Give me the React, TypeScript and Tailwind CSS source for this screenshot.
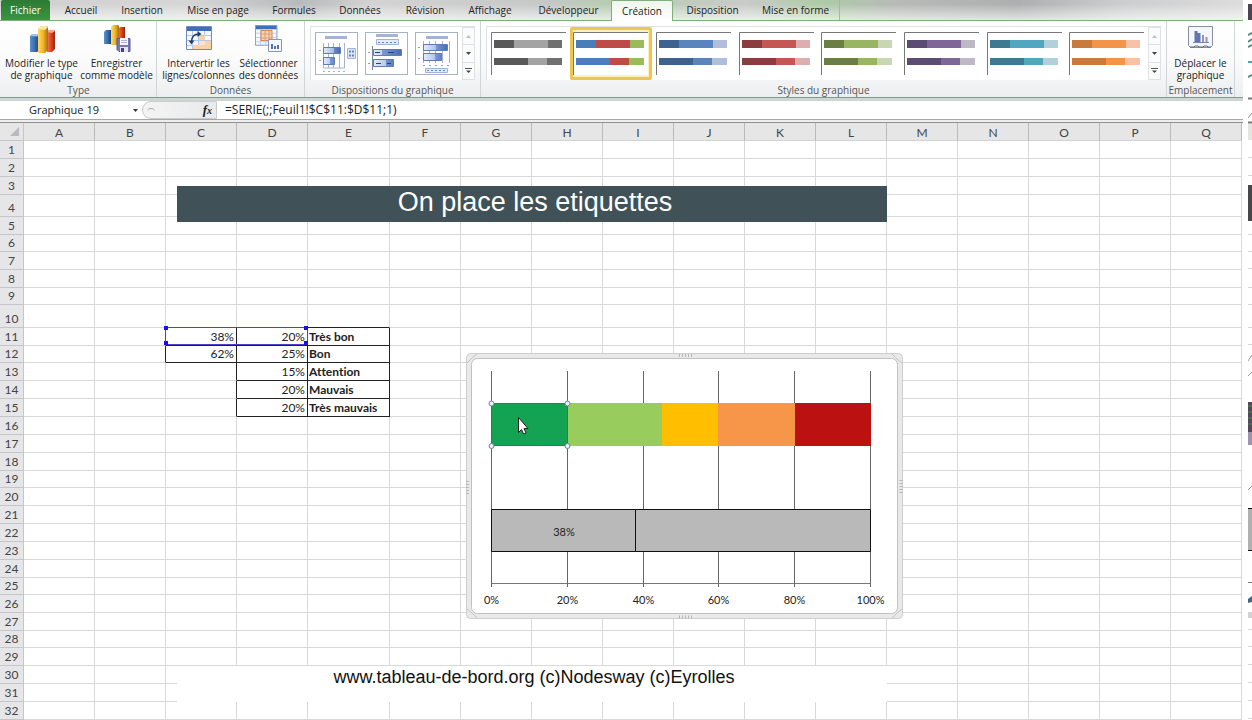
import React from "react";

const tabs = [
  { label: "Accueil", width: "w-[62px]" },
  { label: "Insertion", width: "w-[60px]" },
  { label: "Mise en page", width: "w-[92px]" },
  { label: "Formules", width: "w-[60px]" },
  { label: "Données", width: "w-[72px]" },
  { label: "Révision", width: "w-[58px]" },
  { label: "Affichage", width: "w-[72px]" },
  { label: "Développeur", width: "w-[85px]" },
  { label: "Création", width: "w-[62px]" },
  { label: "Disposition", width: "w-[79px]" },
  { label: "Mise en forme", width: "w-[88px]" },
];

const chartStyles = [
  ["#595959", "#a3a3a3", "#707070"],
  ["#4a7ebb", "#be4b48", "#9abb59"],
  ["#3c6290", "#5a84be", "#b0bddb"],
  ["#8a3c3e", "#c45654", "#dcaeb0"],
  ["#6c7f42", "#9ab561", "#c9d6b2"],
  ["#5c4c74", "#7e6699", "#bcb8c4"],
  ["#3b7a90", "#52a7c0", "#b0d0dc"],
  ["#c97b3d", "#f39549", "#f8c2a8"],
];

const columns = "ABCDEFGHIJKLMNOPQ".split("");

const rowHeights = [
  18, 18, 18, 22, 18, 17, 18, 18, 17, 23, 18, 17, 18, 18, 18, 18, 18, 18, 17,
  18, 18, 18, 18, 18, 17, 18, 18, 17, 18, 18, 18, 18,
];

const heightClass: Record<number, string> = {
  17: "h-[17px]",
  18: "h-[18px]",
  22: "h-[22px]",
  23: "h-[23px]",
};

const cells: Record<string, string> = {
  C11: "38%", D11: "20%", E11: "Très bon",
  C12: "62%", D12: "25%", E12: "Bon",
  D13: "15%", E13: "Attention",
  D14: "20%", E14: "Mauvais",
  D15: "20%", E15: "Très mauvais",
};

function isBoxed(col: string, row: number) {
  if (row < 11 || row > 15) return false;
  return col === "D" || col === "E" || (col === "C" && row < 13);
}

function cellBorders(index: number, row: number) {
  const col = columns[index];
  const right = isBoxed(col, row) || isBoxed(columns[index + 1], row);
  const bottom = isBoxed(col, row) || isBoxed(col, row + 1);
  return `${right ? "border-r-[#222]" : "border-r-[#d9d9dc]"} ${bottom ? "border-b-[#222]" : "border-b-[#d9d9dc]"}`;
}

function ChartTypeIcon() {
  return (
    <svg width="28" height="28" viewBox="0 0 28 28" aria-hidden="true">
      <defs>
        <linearGradient id="blue" x2="1"><stop stopColor="#5a92cc" /><stop offset=".5" stopColor="#3a6fae" /><stop offset="1" stopColor="#1f4478" /></linearGradient>
        <linearGradient id="gold" x2="1"><stop stopColor="#ffd96a" /><stop offset=".5" stopColor="#f4b62a" /><stop offset="1" stopColor="#a86e08" /></linearGradient>
        <linearGradient id="red" x2="1"><stop stopColor="#f0805a" /><stop offset=".5" stopColor="#dc4526" /><stop offset="1" stopColor="#97240f" /></linearGradient>
      </defs>
      <path d="M2 11l2-2h6l1 1v16l-2 1H2z" fill="url(#blue)" />
      <path d="M2 11l2-2h6l1 1-2 1.500z" fill="#9cc2ea" />
      <path d="M19 7l2-2h5l1 1v18l-3 3h-5z" fill="url(#red)" />
      <path d="M19 7l2-2h5l1 1-3 2z" fill="#f7a58c" />
      <path d="M10 4l3-3h5l2 1v23l-3 3h-7z" fill="url(#gold)" />
      <path d="M10 4l3-3h5l2 1-3 3z" fill="#ffe9a0" />
    </svg>
  );
}

function SaveTemplateIcon() {
  return (
    <svg width="28" height="28" viewBox="0 0 28 28" aria-hidden="true">
      <path d="M1 7l2-2h5v14H1z" fill="url(#blue)" />
      <path d="M15 4l2-2h5v14h-7z" fill="url(#red)" />
      <path d="M8 2l2-2h5l1 1v17l-2 2H8z" fill="url(#gold)" />
      <path d="M14 13.500h13v13H16l-2-2z" fill="#7b76b4" stroke="#5a5694" />
      <path d="M17 13h8v7h-8z" fill="#f6f6fc" />
      <path d="M18 15.500h6M18 17.500h6" stroke="#b6b6cc" />
      <path d="M17 22h8v5h-8z" fill="#e6e6f0" />
      <path d="M18 23h3v4h-3z" fill="#45427c" />
    </svg>
  );
}

function TableGlyph() {
  return (
    <g>
      <path d="M.5.5h25v23H.5z" fill="#f5f9ff" stroke="#6d8bc0" />
      <path d="M1 1h24v4H1z" fill="#3f6fb8" />
      <path d="M1 9.500h24M1 14.500h24M1 19.500h24M6.500 5v18M12.500 5v18M18.500 5v18" stroke="#b6c8e6" fill="none" />
    </g>
  );
}

function SwitchIcon() {
  return (
    <svg width="28" height="28" viewBox="-1 -1 28 28" aria-hidden="true">
      <TableGlyph />
      <path d="M13 10h6v4h-6zM19 15h6v8h-6zM7 19h12v4H7z" fill="#f8d3a8" />
      <path d="M13 15h6v4h-6z" fill="#fbe5c8" />
      <path d="M5.500 16C5.500 11 8 8 13 8" fill="none" stroke="#223f70" strokeWidth="1.500" />
      <path d="M11.500 5l4 3-4 3zM2.500 14.500h6L5.500 18.500z" fill="#223f70" />
    </svg>
  );
}

function SelectDataIcon() {
  return (
    <svg width="28" height="28" viewBox="0 0 28 28" aria-hidden="true">
      <g transform="scale(.86)"><TableGlyph /></g>
      <path d="M6 5.500h11v10H6z" fill="#f8d5b2" stroke="#d9844c" />
      <path d="M6 9h11M6 13h11M10 5v11M14 5v11" stroke="#dc9b70" />
      <path d="M13.500 14.500h13v12h-13z" fill="#f5f8fd" stroke="#8797b3" />
      <path d="M17 24v-5M20 24v-3M23 24v-4" stroke="#5573a8" strokeWidth="2" />
    </svg>
  );
}

function MoveChartIcon() {
  return (
    <svg width="28" height="26" viewBox="0 0 28 26" aria-hidden="true">
      <path d="M1.500 1.500h24v19l-2 2h-20l-2-2z" fill="#f4f6fb" stroke="#868d9c" />
      <path d="M3 22h4l1-1h3l1 1h4l1-1h3l1 1h3" stroke="#5f6673" fill="none" />
      <path d="M9 6v11M12 8v9" stroke="#6275ae" strokeWidth="3" />
      <path d="M16 10v7M19.500 12v5" stroke="#9a91bd" strokeWidth="2" />
      <path d="M6 17.500h16" stroke="#7c86a8" />
    </svg>
  );
}

function LayoutThumb({ kind }: { kind: number }) {
  return (
    <svg width="43" height="43" viewBox="0 0 43 43" aria-hidden="true">
      <defs>
        <linearGradient id="pale" x2="1"><stop stopColor="#e3ecfa" /><stop offset="1" stopColor="#7f9dd8" /></linearGradient>
        <linearGradient id="deep" x2="1"><stop stopColor="#7d9ad4" /><stop offset="1" stopColor="#4a6cb2" /></linearGradient>
      </defs>
      <rect x=".5" y=".5" width="42" height="42" fill="#fff" stroke="#a9b3c6" />
      {kind === 0 && (
        <g>
          <path d="M10 5.500h22" stroke="#a5b2d4" strokeWidth="3" />
          <path d="M8.500 11v25h21M13.500 11v25M18.500 11v25M24.500 11v25M29.500 11v25" stroke="#a9b3c8" fill="none" />
          <path d="M8.500 15.500h17v6h-17zM8.500 25.500h11v7h-11z" fill="url(#pale)" stroke="#5f7cb8" />
          <path d="M19 16h6v5h-6zM15 26h4v6h-4z" fill="url(#deep)" />
          <path d="M4 18.500h2M4 28.500h2M8 39.500h23" stroke="#a3b1cf" strokeDasharray="2 3" />
          <path d="M32.500 16.500h8v10h-8z" fill="#dce6f7" stroke="#9fb3dc" />
          <path d="M34 19.500h5M34 23.500h5" stroke="#6484c4" strokeWidth="2" strokeDasharray="2 1" />
        </g>
      )}
      {kind === 1 && (
        <g>
          <path d="M11 3.500h22" stroke="#a5b2d4" strokeWidth="3" />
          <path d="M11.500 7.500h22v5h-22z" fill="#e4ecf9" stroke="#9fb3dc" />
          <path d="M13 10.500h19" stroke="#6484c4" strokeDasharray="2 2" />
          <path d="M7.500 14v24" stroke="#7787a8" />
          <path d="M8.500 17.500h28v6h-28zM8.500 27.500h20v7h-20z" fill="url(#pale)" stroke="#5f7cb8" />
          <path d="M17 18h19v5H17zM21 28h7v6h-7z" fill="url(#deep)" />
          <path d="M10 20.500h5M23 20.500h6M11 31.500h5M22 31.500h4" stroke="#2c4274" />
          <path d="M3 20.500h2M3 31.500h2" stroke="#8fa0c4" />
        </g>
      )}
      {kind === 2 && (
        <g>
          <path d="M11 5.500h22" stroke="#a5b2d4" strokeWidth="3" />
          <path d="M8.500 9v22M14.500 9v22M20.500 9v22M27.500 9v22M34.500 9v22" stroke="#a9b3c8" />
          <path d="M8.500 12.500h24v6h-24zM8.500 21.500h18v7h-18z" fill="url(#pale)" stroke="#5f7cb8" />
          <path d="M21 13h11v5H21zM20 22h6v6h-6z" fill="url(#deep)" />
          <path d="M3 15.500h2M3 26.500h2M8 33.500h27" stroke="#8fa0c4" strokeDasharray="2 4" />
          <path d="M10.500 36.500h22v4h-22z" fill="#e4ecf9" stroke="#9fb3dc" />
          <path d="M12 38.500h19" stroke="#6484c4" strokeDasharray="2 2" />
        </g>
      )}
    </svg>
  );
}

function GalleryScroll() {
  return (
    <div className="flex w-[13px] flex-col border border-[#dfe1e4] bg-[#fafbfb]">
      <button aria-label="Ligne précédente" className="flex flex-1 items-center justify-center">
        <svg width="5" height="3" viewBox="0 0 5 3"><path d="M0 3h5L2.500 0z" fill="#c0c0c0" /></svg>
      </button>
      <button aria-label="Ligne suivante" className="flex flex-1 items-center justify-center border-y border-[#dfe1e4]">
        <svg width="5" height="3" viewBox="0 0 5 3"><path d="M0 0h5L2.500 3z" fill="#444" /></svg>
      </button>
      <button aria-label="Autres" className="flex flex-1 items-center justify-center">
        <svg width="7" height="6" viewBox="0 0 7 6"><path d="M0 .5h7" stroke="#555" /><path d="M1 2.500h5L3.500 5z" fill="#444" /></svg>
      </button>
    </div>
  );
}

function Group({ label, className, children }: { label: string; className: string; children: React.ReactNode }) {
  return (
    <section aria-label={label} className={`flex flex-col border-r border-[#d0d6d5] ${className}`}>
      <div className="flex h-[62px] justify-center">{children}</div>
      <div className="text-center text-[10px] leading-[14px] whitespace-nowrap text-[#555]">{label}</div>
    </section>
  );
}

function BigButton({ icon, lines, className }: { icon: React.ReactNode; lines: string[]; className: string }) {
  return (
    <button className={`flex flex-col items-center pt-1 ${className}`}>
      <span className="flex h-8 items-start">{icon}</span>
      {lines.map((line) => (
        <span key={line} className="text-[10px] leading-3 whitespace-nowrap text-[#222]">{line}</span>
      ))}
    </button>
  );
}

function StyleThumb({ colors, selected, name }: { colors: string[]; selected: boolean; name: string }) {
  return (
    <button
      aria-label={name}
      aria-pressed={selected}
      className={`flex items-center justify-center rounded-xs border-[3px] ${selected ? "border-[#efc655] bg-[#fff3b8]" : "border-transparent"}`}
    >
      <svg width="75" height="43" viewBox="0 0 75 43">
        <rect width="75" height="43" fill="#fff" />
        <path d="M.5 43V.5H75" fill="none" stroke="#777" />
        <path d="M3 8h20v8H3zM3 26h34v7H3z" fill={colors[0]} />
        <path d="M23 8h34v8H23zM37 26h19v7H37z" fill={colors[1]} />
        <path d="M57 8h14v8H57zM56 26h15v7H56z" fill={colors[2]} />
      </svg>
    </button>
  );
}

function Ribbon() {
  return (
    <div className="flex h-[77px] border-b border-[#7f9a8c] bg-linear-to-b from-white via-[#fbfbfc] to-[#eceeef] pl-px">
      <Group label="Type" className="w-[156px]">
        <BigButton icon={<ChartTypeIcon />} lines={["Modifier le type", "de graphique"]} className="w-[76px]" />
        <BigButton icon={<SaveTemplateIcon />} lines={["Enregistrer", "comme modèle"]} className="w-[74px]" />
      </Group>
      <Group label="Données" className="w-[148px]">
        <BigButton icon={<SwitchIcon />} lines={["Intervertir les", "lignes/colonnes"]} className="w-[76px]" />
        <BigButton icon={<SelectDataIcon />} lines={["Sélectionner", "des données"]} className="w-[64px]" />
      </Group>
      <Group label="Dispositions du graphique" className="w-[176px]">
        <div className="mt-[5px] flex h-[54px] border-t border-l border-[#dfe1e4] bg-white">
          <div className="flex items-center gap-[7px] px-1">
            {[0, 1, 2].map((kind) => (
              <button key={kind} aria-label={`Mise en forme ${kind + 1}`}><LayoutThumb kind={kind} /></button>
            ))}
          </div>
          <GalleryScroll />
        </div>
      </Group>
      <Group label="Styles du graphique" className="flex-1">
        <div className="mt-[5px] mr-[5px] ml-[5px] flex h-[54px] flex-1 border-t border-l border-[#dfe1e4] bg-white">
          <div className="grid flex-1 grid-cols-8">
            {chartStyles.map((colors, i) => (
              <StyleThumb key={i} colors={colors} selected={i === 1} name={`Style ${i + 1}`} />
            ))}
          </div>
          <GalleryScroll />
        </div>
      </Group>
      <Group label="Emplacement" className="w-[68px]">
        <BigButton icon={<MoveChartIcon />} lines={["Déplacer le", "graphique"]} className="w-[64px]" />
      </Group>
      <div className="w-2" />
    </div>
  );
}

function FormulaBar() {
  return (
    <div className="flex h-[19px] border-b border-[#a8a8a8] bg-white text-[11px] text-[#222]">
      <input aria-label="Zone Nom" defaultValue="Graphique 19" className="w-[128px] bg-white text-center outline-none" />
      <button aria-label="Liste des noms" className="flex w-[14px] items-center justify-center">
        <svg width="5" height="3" viewBox="0 0 5 3"><path d="M0 0h5L2.500 3z" fill="#333" /></svg>
      </button>
      <div className="flex w-[75px] items-center justify-between rounded-l-full border border-[#c9cbcd] bg-linear-to-r from-[#f4f4f5] to-[#e9eaeb] pr-1 pl-1">
        <span className="h-1 w-2 rounded-t-full border-t border-[#aaa]" />
        <button aria-label="Insérer une fonction" className="font-['Liberation_Serif',serif] text-[13px] leading-4 font-bold italic">
          f<span className="text-[10px]">x</span>
        </button>
      </div>
      <input aria-label="Barre de formule" defaultValue="=SERIE(;;Feuil1!$C$11:$D$11;1)" className="min-w-0 flex-1 bg-white pl-2 text-[12px] outline-none" />
    </div>
  );
}

const ticks = [
  [491.5, "0%"], [567.5, "20%"], [643.5, "40%"], [718.5, "60%"], [794.5, "80%"], [870.5, "100%"],
] as const;

const segments = [
  [492, 76, "#14a352"], [568, 94, "#98cd5e"], [662, 56, "#ffbf00"], [718, 77, "#f79549"], [795, 76, "#bb1111"],
] as const;

function Chart() {
  return (
    <svg width="438" height="266" viewBox="465 353 438 266" role="img" aria-label="Graphique 19">
      <rect x="466.5" y="353.5" width="436" height="265" rx="4" fill="#e9e9ea" stroke="#cdced0" />
      <rect x="471.5" y="358.500" width="426" height="255" rx="6" fill="#fff" stroke="#c0c1c3" />
      <path d="M467 363l5-5 5-4M892 354l5 5 5 4M467 609l5 4 5 5M902 609l-5 4-5 5" stroke="#c4c5c7" fill="none" />
      <g stroke="#b5b6b8" strokeWidth="3" strokeDasharray="1 2">
        <path d="M679 355.500h13M679 617h13M467.500 481v13M901 480v13" />
      </g>
      <path d="M491 583.500h380" stroke="#777" />
      {ticks.map(([x, label]) => (
        <g key={label}>
          <path d={`M${x} 371V587`} stroke="#666" />
          <text x={x} y="604" textAnchor="middle" fontSize="11" fill="#222">{label}</text>
        </g>
      ))}
      {segments.map(([x, width, color]) => (
        <rect key={x} x={x} y="403" width={width} height="43" fill={color} />
      ))}
      <rect x="491.500" y="403.500" width="76" height="42" fill="none" stroke="#4b6c62" />
      {[[491.5, 403.5], [567.5, 403.5], [491.5, 446], [567.5, 446]].map(([cx, cy]) => (
        <circle key={`${cx}-${cy}`} cx={cx} cy={cy} r="2.500" fill="#e8f1f5" stroke="#6b8494" />
      ))}
      <path d="M491.500 509.500h144v42h-144zM635.500 509.500h235v42h-235z" fill="#b9b9b9" stroke="#111" />
      <text x="564" y="536" textAnchor="middle" fontSize="11" fill="#222">38%</text>
      <path d="M518.500 417.500v15l3-3 2 4.500 2.500-1-2-4.500h4z" fill="#fff" stroke="#222" strokeWidth="1" />
    </svg>
  );
}

function Sheet() {
  return (
    <main className="relative font-[Lato,sans-serif] text-[12px] text-[#222] [font-variant-ligatures:none]">
      <table className="w-[1242px] table-fixed border-separate border-spacing-0">
        <colgroup>
          <col className="w-[24px]" />
          {columns.map((c) => <col key={c} className={c === "E" ? "w-[82px]" : "w-[71px]"} />)}
        </colgroup>
        <thead>
          <tr className="h-[18px] bg-[#e6e6e7] leading-[14px] text-[#444]">
            <th className="border-r border-b border-[#c5c6c8] p-0">
              <svg className="mr-1 ml-auto" width="9" height="9" viewBox="0 0 9 9" aria-label="Tout sélectionner"><path d="M9 0v9H0z" fill="#b9babd" /></svg>
            </th>
            {columns.map((c) => (
              <th key={c} className="border-r border-b border-r-[#b9babc] border-b-[#d2d3d5] p-0 align-bottom font-normal">{c}</th>
            ))}
          </tr>
        </thead>
        <tbody>
          {rowHeights.map((h, i) => {
            const row = i + 1;
            return (
              <tr key={row} className={`${heightClass[h]} leading-4`}>
                <th className="border-r border-b border-[#c5c6c8] bg-[#e6e6e9] p-0 align-bottom font-normal text-[#444]">{row}</th>
                {columns.map((c, index) => (
                  <td
                    key={c}
                    className={`border-r border-b p-0 align-bottom whitespace-nowrap ${c === "E" ? "pl-px font-bold" : "pr-[2px] text-right"} ${cellBorders(index, row)}`}
                  >
                    {cells[`${c}${row}`]}
                  </td>
                ))}
              </tr>
            );
          })}
        </tbody>
      </table>

      <div className="absolute top-[204px] left-[165px] h-[18px] w-[143px] border border-[#4a42cc]">
        <span className="absolute -top-[2px] -left-[2px] size-1 bg-[#1a10e0]" />
        <span className="absolute -top-[2px] -right-[1px] size-1 bg-[#1a10e0]" />
        <span className="absolute -bottom-[1px] -left-[2px] size-1 bg-[#1a10e0]" />
        <span className="absolute -right-[1px] -bottom-[1px] size-1 bg-[#1a10e0]" />
      </div>
      <h1 className="absolute top-[63px] left-[177px] h-[36px] w-[710px] bg-[#405258] pl-[6px] text-center font-['Liberation_Sans',Arial,sans-serif] text-[27px] leading-8 text-white">
        On place les etiquettes
      </h1>
      <div className="absolute top-[230px] left-[465px]"><Chart /></div>
      <p className="absolute top-[543px] left-[177px] h-[36px] w-[710px] bg-white pl-1 text-center font-['Liberation_Sans',Arial,sans-serif] text-[18px] leading-[22px] text-[#111]">
        www.tableau-de-bord.org (c)Nodesway (c)Eyrolles
      </p>
    </main>
  );
}

function EdgeStrip() {
  return (
    <svg width="4" height="720" viewBox="0 0 4 720" aria-hidden="true">
      <path d="M0 4h4v16H0z" fill="#4a4550" />
      <path d="M0 35l4-2M0 42l4-3M0 47l4-2M0 77l4-2" stroke="#5a8c80" strokeWidth="2" />
      <path d="M0 62h4" stroke="#4fa0b0" strokeWidth="2" />
      <path d="M0 98.500h4M0 122.500h4" stroke="#777" strokeWidth="2" />
      <path d="M0 118l4-5" stroke="#999" />
      <path d="M0 124h4v16H0z" fill="#e4e4e0" />
      <path d="M0 185h4v36H0z" fill="#47474a" />
      <path d="M0 157.500h4M0 175.500h4M0 234.500h4M0 251.500h4M0 268.500h4M0 287.500h4M0 304.500h4M0 327.500h4M0 344.500h4M0 629.500h4M0 646.500h4M0 664.500h4M0 682.500h4M0 700.500h4M0 718.500h4" stroke="#d6d6d8" />
      <path d="M0 361l4-6M0 376l4-4M0 490l4-4" stroke="#999" />
      <path d="M0 402h4v30H0z" fill="#514959" />
      <path d="M0 406h4M0 412h4M0 418h4M0 424h4" stroke="#4d6a50" strokeWidth="2" />
      <path d="M0 432h4v13H0z" fill="#9c94a8" />
      <path d="M0 508h4v43H0z" fill="#b0b0b0" />
      <path d="M0 508.500h4M0 550.500h4" stroke="#111" />
      <path d="M0 582.500h4" stroke="#777" />
      <path d="M0 599l4-3v6l-4 1z" fill="#4b6377" />
      <path d="M0 612h4v6H0z" fill="#d2d2d4" />
    </svg>
  );
}

export default function App() {
  return (
    <div className="flex h-screen overflow-hidden bg-white font-['Open_Sans',sans-serif]">
      <div className="min-w-0 flex-1 overflow-hidden">
        <nav className="flex h-[21px] border-b border-[#7fae7c] bg-[linear-gradient(to_bottom,rgba(255,255,255,0)_20%,rgba(255,255,255,0.65)),linear-gradient(to_right,#cfcfd0_0%,#d6d6d7_15%,#b9babb_24%,#d3d3d4_30%,#c6c7c7_44%,#b4cdae_50%,#c9cbc9_60%,#aecba6_66%,#b7bab7_72%,#aeafb0_82%,#cccdce_90%,#dcdcdd_100%)] text-[10px] text-[#222]">
          <button className="ml-px w-[49px] rounded-t-xs bg-linear-to-b from-[#2c7a35] to-[#3d9440] pt-px text-white">Fichier</button>
          {tabs.map(({ label, width }) => (
            <button
              key={label}
              className={`pt-px whitespace-nowrap ${width} ${label === "Création" ? "-mb-px rounded-t-xs border-x border-t border-[#7fae7c] bg-linear-to-b from-[#eff6ec] to-white" : ""} ${label === "Mise en forme" ? "border-r border-[#a8b5a6]" : ""}`}
            >
              {label}
            </button>
          ))}
        </nav>
        <Ribbon />
        <div className="h-[3px] bg-[#cdd6d2]" />
        <FormulaBar />
        <div className="h-[3px] border-b border-[#8f9193] bg-[#eeeeef]" />
        <Sheet />
      </div>
      <div className="ml-[5px] w-1"><EdgeStrip /></div>
    </div>
  );
}
